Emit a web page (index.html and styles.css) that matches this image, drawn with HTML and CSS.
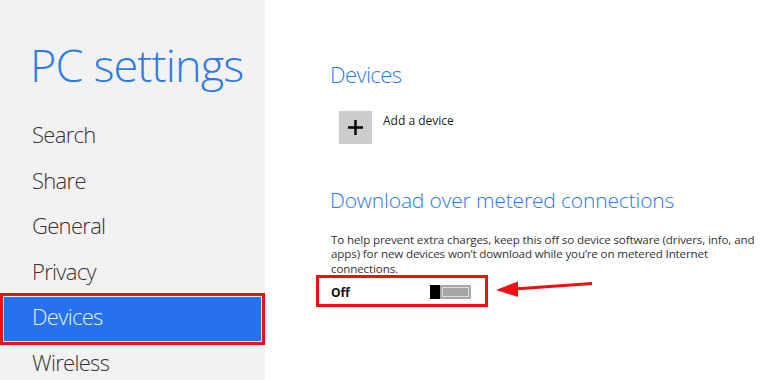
FILE: index.html
```html
<!DOCTYPE html>
<html>
<head>
<meta charset="utf-8">
<link rel="stylesheet" href="styles.css">
</head>
<body>
<div class="app">
  <aside class="sidebar">
    <h1 class="title">PC settings</h1>
    <nav class="nav">
      <div class="nav-item">Search</div>
      <div class="nav-item">Share</div>
      <div class="nav-item">General</div>
      <div class="nav-item">Privacy</div>
      <div class="nav-item active">Devices</div>
      <div class="nav-item">Wireless</div>
    </nav>
  </aside>
  <main class="content">
    <h2 class="heading">Devices</h2>
    <div class="add-row">
      <div class="add-btn">
        <svg width="17" height="17" viewBox="0 0 17 17"><path d="M8.5 1v15M1 8.5h15" stroke="#000" stroke-width="2.4"/></svg>
      </div>
      <div class="add-label">Add a device</div>
    </div>
    <h2 class="heading heading2">Download over metered connections</h2>
    <p class="desc">To help prevent extra charges, keep this off so device software (drivers, info, and apps) for new devices won’t download while you’re on metered Internet connections.</p>
    <div class="toggle-wrap">
      <div class="toggle-row">
        <span class="toggle-label">Off</span>
        <span class="toggle"><span class="thumb"></span><span class="track"></span></span>
      </div>
      <svg class="arrow" width="100" height="24" viewBox="0 0 100 24">
        <path d="M18 12 L96 6.5" stroke="#ee1111" stroke-width="3" fill="none"/>
        <polygon points="0,13 22,4.5 22,20" fill="#ee1111"/>
      </svg>
    </div>
  </main>
</div>
</body>
</html>
```
FILE: styles.css
```css
html, body {
  margin: 0;
  padding: 0;
  background: #ffffff;
}
body {
  width: 768px;
  height: 380px;
  overflow: hidden;
  font-family: "Open Sans", "Noto Sans", sans-serif;
}
.app {
  display: flex;
  height: 380px;
}
.sidebar {
  width: 265px;
  flex: none;
  background: #f2f2f2;
  padding-top: 42px;
  box-sizing: border-box;
}
.title {
  margin: 0 0 27px 0;
  padding-left: 30px;
  font-size: 45px;
  line-height: 45px;
  font-weight: 300;
  color: #2b7ae8;
  letter-spacing: -0.85px;
  white-space: nowrap;
}
.nav-item {
  height: 41px;
  padding-bottom: 4.5px;
  line-height: 41px;
  padding-left: 32px;
  font-size: 22px;
  font-weight: 300;
  color: #333333;
  letter-spacing: -0.7px;
}
.nav-item.active {
  position: relative;
  background: #2672ec;
  color: #e8eefc;
  height: 46px;
  line-height: 41px;
  padding-bottom: 0;
  margin-bottom: -0.5px;
}
.nav-item.active::after {
  content: "";
  position: absolute;
  left: 0;
  right: 0;
  top: -3px;
  bottom: -3px;
  border: 3px solid #ee1111;
  box-shadow: inset 0 0 0 1px #dfe8f7;
}
.content {
  flex: 1;
  padding: 61px 0 0 65px;
  color: #333333;
}
.heading {
  margin: 0;
  font-size: 22px;
  line-height: 26px;
  font-weight: 300;
  color: #2b7ae8;
  letter-spacing: -0.6px;
  white-space: nowrap;
}
.heading2 {
  font-size: 21px;
  letter-spacing: -0.15px;
  margin-top: 43px;
}
.add-row {
  display: flex;
  align-items: flex-start;
  margin-top: 24px;
  padding-left: 9px;
}
.add-btn {
  width: 33px;
  height: 33px;
  background: #cccccc;
  display: flex;
  align-items: center;
  justify-content: center;
}
.add-label {
  margin-left: 11px;
  margin-top: 2px;
  font-size: 12px;
  line-height: 16px;
  color: #222222;
}
.desc {
  margin: 19.5px 0 0 1px;
  width: 430px;
  font-size: 11.6px;
  line-height: 14.7px;
  letter-spacing: -0.13px;
  color: #333333;
}
.toggle-wrap {
  display: flex;
  align-items: flex-start;
  margin-top: -1.5px;
  margin-left: -14px;
}
.toggle-row {
  width: 154px;
  height: 19px;
  border: 3px solid #ee1111;
  display: flex;
  align-items: flex-start;
  padding-top: 7px;
  padding-left: 12px;
  box-sizing: content-box;
}
.toggle-label {
  width: 99px;
  font-size: 12px;
  font-weight: 700;
  line-height: 16px;
  color: #111111;
  margin-top: 0px;
}
.toggle {
  display: flex;
  height: 14px;
  width: 41px;
}
.thumb {
  width: 10px;
  background: #000000;
}
.track {
  flex: 1;
  background: #a6a6a6;
  box-shadow: inset 0 0 0 2px #a6a6a6, inset 0 0 0 3px #dadada;
}
.arrow {
  margin-left: 8px;
  margin-top: 2px;
}
```
